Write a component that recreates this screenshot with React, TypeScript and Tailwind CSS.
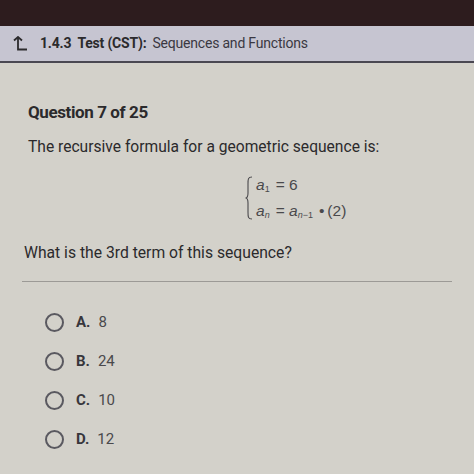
export default function App() {
  const options = [
    { letter: "A.", value: "8" },
    { letter: "B.", value: "24" },
    { letter: "C.", value: "10" },
    { letter: "D.", value: "12" },
  ];

  return (
    <div className="w-[474px] h-[474px] overflow-hidden bg-[#d3d1ca] flex flex-col font-['Roboto',sans-serif] text-[#2b2a2c]">
      {/* Dark bezel */}
      <div className="h-[26px] shrink-0 bg-[#2d1c1e]" />

      {/* Header bar */}
      <div className="h-[37px] shrink-0 bg-[#c6c5d1] border-b-2 border-[#4a4852] flex items-center pl-[12px] text-[14px]">
        <svg className="w-[16px] h-[16px] mr-[12px]" viewBox="0 0 16 16" fill="none" stroke="#2b2a2c" strokeWidth={1.8}>
          <path d="M2 4.5 L6 1 L10 4.5" strokeLinejoin="miter" />
          <path d="M6 1.5 V13.5 H15" />
        </svg>
        <span className="font-bold tracking-[-0.2px]">1.4.3&nbsp; Test (CST):</span>
        <span className="ml-[6px] text-[#3a3842] tracking-[-0.2px]">Sequences and Functions</span>
      </div>

      {/* Question body */}
      <div className="flex flex-col pl-[28px] pr-[20px]">
        <div className="mt-[41px] text-[17px] font-bold tracking-[-0.4px] leading-none">Question 7 of 25</div>
        <div className="mt-[19px] text-[15.6px] leading-none">The recursive formula for a geometric sequence is:</div>

        {/* Formula */}
        <div className="mt-[20px] ml-[217px] flex items-stretch text-[15.5px] text-[#4a494c] font-['Liberation_Sans',sans-serif]">
          <svg className="w-[8px] h-[44px] mr-[3px]" viewBox="0 0 8 44" fill="none" stroke="#4a494c" strokeWidth={1.1}>
            <path d="M7 1 C3 1 3 3 3 8 V17 C3 20 2 22 0.5 22 C2 22 3 24 3 27 V36 C3 41 3 43 7 43" />
          </svg>
          <div className="flex flex-col justify-between py-[1px] leading-none">
            <div>
              <i>a</i>
              <sub className="text-[9px]">1</sub>
              <span className="ml-[6px]">= 6</span>
            </div>
            <div>
              <i>a</i>
              <sub className="text-[9px]">
                <i>n</i>
              </sub>
              <span className="ml-[6px]">= </span>
              <i>a</i>
              <sub className="text-[9px]">
                <i>n</i>−1
              </sub>
              <span className="ml-[6px]">•</span>
              <span className="ml-[3px]">(2)</span>
            </div>
          </div>
        </div>

        <div className="mt-[25px] -ml-[4px] text-[15.7px] leading-none">What is the 3rd term of this sequence?</div>
      </div>

      {/* Separator */}
      <div className="mt-[21px] mx-[22px] h-px bg-[#9c9a96]" />

      {/* Options */}
      <div className="flex flex-col gap-[20px] mt-[31px] pl-[45px]">
        {options.map((o) => (
          <div key={o.letter} className="flex items-center text-[15px] leading-none">
            <div className="w-[19px] h-[19px] rounded-full border-2 border-[#5a5960]" />
            <span className="ml-[12px] font-bold text-[#37363c]">{o.letter}</span>
            <span className="ml-[8px] text-[#4a494c]">{o.value}</span>
          </div>
        ))}
      </div>
    </div>
  );
}
